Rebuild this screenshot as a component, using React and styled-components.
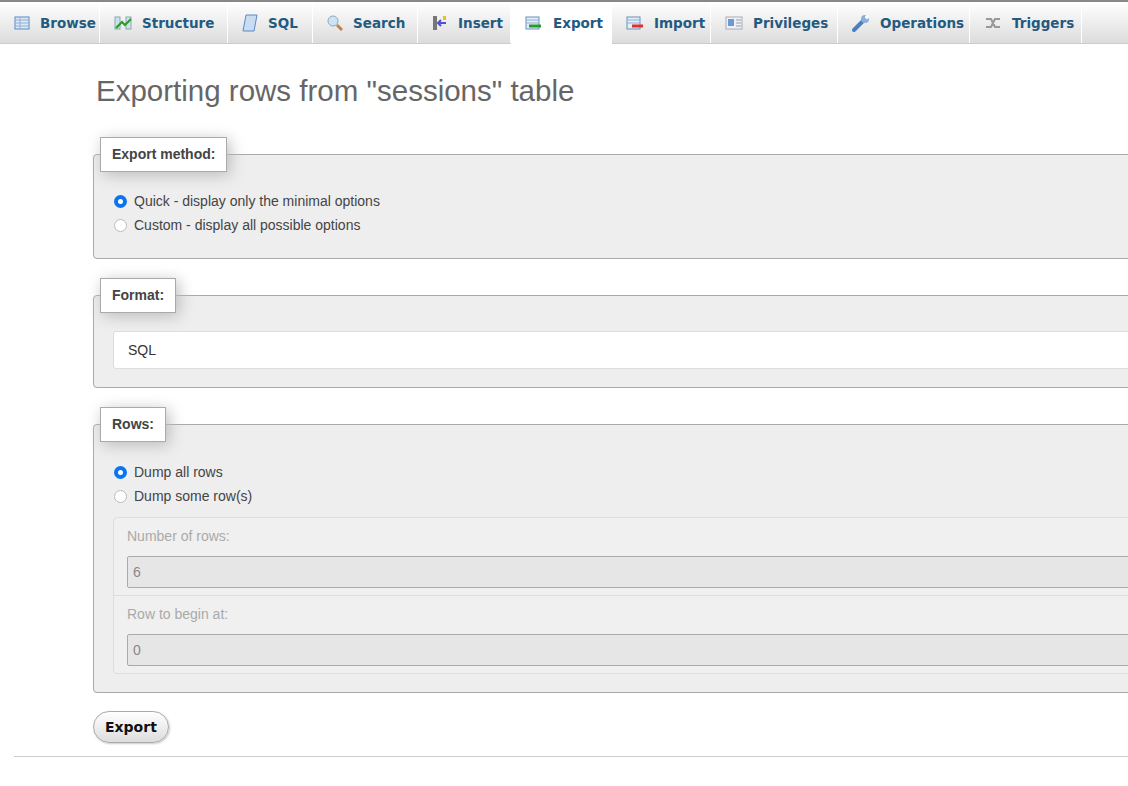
import React from 'react'
import styled, { createGlobalStyle } from 'styled-components'

const Global = createGlobalStyle`
  html, body { margin: 0; padding: 0; background: #fff; overflow: hidden; }
  body { font-family: "Liberation Sans", Arial, sans-serif; }
`

const TopBar = styled.div`
  display: flex;
  border-top: 2px solid #888;
  height: 41px;
  background: linear-gradient(#fff, #dcdcdc);
  border-bottom: 1px solid #ccc;
`

const Tab = styled.div`
  display: flex;
  align-items: center;
  gap: 10px;
  padding: 0 14px;
  width: ${p => p.w}px;
  box-sizing: border-box;
  border-right: 1px solid #fff;
  font-family: "DejaVu Sans", Verdana, sans-serif;
  font-weight: bold;
  font-size: 13.5px;
  color: #235a81;
  background: ${p => (p.active ? '#fff' : 'transparent')};
  margin-bottom: ${p => (p.active ? '-1px' : '0')};
  svg { flex: none; }
`

const Page = styled.div`
  padding-left: 93px;
  width: 1160px;
`

const Title = styled.h2`
  margin: 30px 0 0 3px;
  font-weight: normal;
  font-size: 29.5px;
  color: #666;
  height: 36px;
`

const Fieldset = styled.fieldset`
  margin: ${p => p.top}px 0 0;
  padding: ${p => p.pt}px 19px ${p => p.bottom}px;
  border: 1px solid #aaa;
  border-radius: 4px;
  background: #eee;
  min-height: 0;
`

const Legend = styled.legend`
  background: #fff;
  border: 1px solid #aaa;
  box-shadow: 3px 3px 15px #bbb;
  font-weight: bold;
  font-size: 14px;
  color: #444;
  padding: 8px 11px 9px;
  margin-left: -13px;
`

const RadioRow = styled.label`
  display: flex;
  align-items: center;
  gap: 7px;
  height: 24px;
  font-size: 14px;
  color: #444;
`

const Radio = styled.span`
  width: 13px;
  height: 13px;
  border-radius: 50%;
  box-sizing: border-box;
  margin-left: 1px;
  border: ${p => (p.on ? '4px solid #0a75f0' : '1px solid #bbb')};
  background: #fff;
`

const Select = styled.div`
  margin-top: 6px;
  height: 36px;
  background: #fff;
  border: 1px solid #ddd;
  border-radius: 3px;
  display: flex;
  align-items: center;
  padding-left: 14px;
  font-size: 14px;
  color: #333;
`

const SubBox = styled.div`
  margin-top: 9px;
  border: 1px solid #ddd;
  border-radius: 4px;
  background: #f0f0f0;
`

const SubRow = styled.div`
  padding: 10px 13px 7px;
  border-top: ${p => (p.sep ? '1px solid #ddd' : 'none')};
`

const SubLabel = styled.div`
  font-size: 14px;
  color: #aaa;
  height: 28px;
`

const Input = styled.div`
  height: 30px;
  border: 1px solid #aaa;
  border-radius: 2px;
  background: #e6e6e6;
  display: flex;
  align-items: center;
  padding-left: 5px;
  font-size: 14px;
  color: #888;
`

const Button = styled.button`
  margin-top: 18px;
  height: 32px;
  padding: 0 11px;
  border: 1px solid #aaa;
  border-radius: 17px;
  background: linear-gradient(#fff, #ddd);
  font-family: "DejaVu Sans", Verdana, sans-serif;
  font-weight: bold;
  font-size: 14px;
  color: #111;
  box-shadow: 1px 1px 2px #ccc;
`

const Rule = styled.hr`
  margin: 13px 0 0 14px;
  border: 0;
  border-top: 1px solid #ccc;
`

const Ico = {
  browse: (
    <svg width="16" height="16"><rect x="1" y="2" width="14" height="12" fill="#dbe8f5" stroke="#5b8ac4" /><path d="M1 5h14M1 8h14M1 11h14M6 2v12" stroke="#8fb0d8" /></svg>
  ),
  structure: (
    <svg width="18" height="16"><rect x="1" y="2" width="5" height="12" fill="#cfe0f0" stroke="#8aa" /><rect x="12" y="2" width="5" height="12" fill="#cfe0f0" stroke="#8aa" /><path d="M2 13l6-6 3 3 6-6" stroke="#2a9a2a" strokeWidth="2" fill="none" /></svg>
  ),
  sql: (
    <svg width="16" height="18"><path d="M4 1h11l-3 16H1z" fill="#c8dcf2" stroke="#5b8ac4" /></svg>
  ),
  search: (
    <svg width="16" height="16"><circle cx="6" cy="6" r="5" fill="#cfe3f7" stroke="#8ab" /><path d="M10 10l5 5" stroke="#b88850" strokeWidth="3" /></svg>
  ),
  insert: (
    <svg width="16" height="16"><rect x="1" y="1" width="4" height="14" fill="#777" /><path d="M14 8H6M9 5L6 8l3 3" stroke="#5050d0" strokeWidth="2" fill="none" /><rect x="11" y="1" width="3" height="4" fill="#e8c020" /></svg>
  ),
  export: (
    <svg width="18" height="16"><rect x="1" y="2" width="13" height="12" fill="#e3eef8" stroke="#6b8fb8" /><path d="M1 5h13M1 8h13" stroke="#8fb0d8" /><path d="M4 11h12" stroke="#2a9a2a" strokeWidth="3" /></svg>
  ),
  import: (
    <svg width="18" height="16"><rect x="1" y="2" width="13" height="12" fill="#e3eef8" stroke="#6b8fb8" /><path d="M1 5h13M1 8h13" stroke="#8fb0d8" /><path d="M6 11h11" stroke="#e03030" strokeWidth="3" /></svg>
  ),
  privileges: (
    <svg width="18" height="14"><rect x="1" y="1" width="16" height="12" fill="#eef2f6" stroke="#aab" /><rect x="3" y="3" width="6" height="7" fill="#6a9ad0" /><path d="M11 4h5M11 7h5M11 10h5" stroke="#99a" /></svg>
  ),
  operations: (
    <svg width="18" height="18"><path d="M2 16l9-9" stroke="#4a80c0" strokeWidth="4" strokeLinecap="round" /><circle cx="13" cy="5" r="4" fill="#8ab0d8" /><circle cx="15" cy="3" r="2" fill="#fff" /></svg>
  ),
  triggers: (
    <svg width="18" height="14"><path d="M2 3h5l4 8h5M2 11h5l4-8h5" stroke="#999" strokeWidth="2" fill="none" /></svg>
  ),
}

const tabs = [
  ['Browse', 'browse', 100],
  ['Structure', 'structure', 128],
  ['SQL', 'sql', 85],
  ['Search', 'search', 105],
  ['Insert', 'insert', 93],
  ['Export', 'export', 101],
  ['Import', 'import', 99],
  ['Privileges', 'privileges', 127],
  ['Operations', 'operations', 132],
  ['Triggers', 'triggers', 112],
]

export default function App() {
  return (
    <>
      <Global />
      <TopBar>
        {tabs.map(([name, icon, w]) => (
          <Tab key={name} w={w} active={name === 'Export'}>
            {Ico[icon]}
            {name}
          </Tab>
        ))}
      </TopBar>
      <Page>
        <Title>Exporting rows from "sessions" table</Title>
        <Fieldset top={27} pt={17} bottom={21}>
          <Legend>Export method:</Legend>
          <RadioRow><Radio on />Quick - display only the minimal options</RadioRow>
          <RadioRow><Radio />Custom - display all possible options</RadioRow>
        </Fieldset>
        <Fieldset top={19} pt={12} bottom={18}>
          <Legend>Format:</Legend>
          <Select>SQL</Select>
        </Fieldset>
        <Fieldset top={19} pt={18} bottom={18}>
          <Legend>Rows:</Legend>
          <RadioRow><Radio on />Dump all rows</RadioRow>
          <RadioRow><Radio />Dump some row(s)</RadioRow>
          <SubBox>
            <SubRow>
              <SubLabel>Number of rows:</SubLabel>
              <Input>6</Input>
            </SubRow>
            <SubRow sep>
              <SubLabel>Row to begin at:</SubLabel>
              <Input>0</Input>
            </SubRow>
          </SubBox>
        </Fieldset>
        <Button>Export</Button>
      </Page>
      <Rule />
    </>
  )
}
